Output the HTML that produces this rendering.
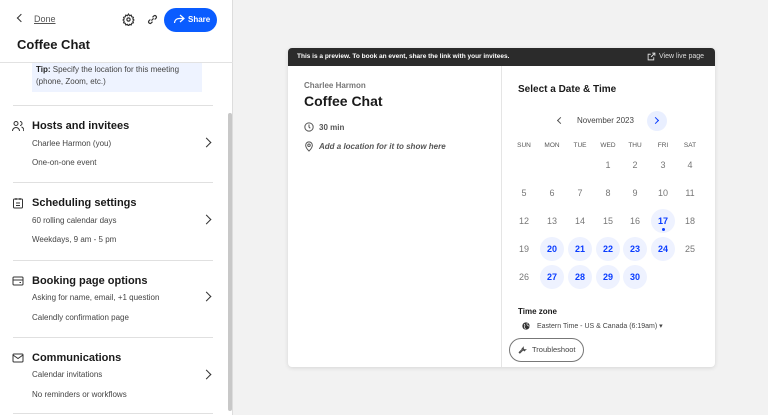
<!DOCTYPE html><html><head><style>
*{margin:0;padding:0;box-sizing:border-box}
body{width:768px;height:415px;overflow:hidden;background:#f2f2f2;font-family:"Liberation Sans",sans-serif;color:#1a1a1a;position:relative}
.sb{position:absolute;left:0;top:0;width:233px;height:415px;background:#fff;border-right:1px solid #ddd}
.abs{position:absolute}
.t{font-size:8px;color:#444}
.h{font-size:11px;font-weight:bold}
.hr{position:absolute;left:13px;width:200px;height:1px;background:#e0e0e0}
.chev{position:absolute;left:203px;width:7px;height:7px;border-right:1.5px solid #333;border-top:1.5px solid #333;transform:rotate(45deg)}
.card{position:absolute;left:288px;top:48px;width:427px;height:319px;background:#fff;border-radius:4px;box-shadow:0 1px 4px rgba(0,0,0,.12);overflow:hidden}
.d{position:absolute;width:24px;height:24px;margin-left:-12px;margin-top:-12px;border-radius:50%;text-align:center;line-height:24px;font-size:9px;color:#777}
.b{background:#eef2ff;color:#0a3cff;font-weight:bold}
.wd{position:absolute;font-size:6.5px;color:#555;width:30px;margin-left:-15px;text-align:center}
</style></head><body>
<div class="sb">
<div class="abs" style="left:18px;top:15px;width:6px;height:6px;border-left:1.5px solid #333;border-bottom:1.5px solid #333;transform:rotate(45deg)"></div>
<div class="abs t" style="left:34px;top:14px;font-size:9px;text-decoration:underline;color:#555">Done</div>
<svg class="abs" style="left:122px;top:13px" width="13" height="13" viewBox="0 0 24 24" fill="none" stroke="#333" stroke-width="2.2"><circle cx="12" cy="12" r="3"/><path d="M12 2l2 3 3-1 1 3 3 1-1 3 2 2-2 2 1 3-3 1-1 3-3-1-2 3-2-3-3 1-1-3-3-1 1-3-2-2 2-2-1-3 3-1 1-3 3 1z"/></svg>
<svg class="abs" style="left:146px;top:13px" width="13" height="13" viewBox="0 0 24 24" fill="none" stroke="#333" stroke-width="2.2"><path d="M10 14l4-4M8 12l-3 3a3 3 0 004 4l3-3M16 12l3-3a3 3 0 00-4-4l-3 3"/></svg>
<div class="abs" style="left:164px;top:8px;width:53px;height:24px;border-radius:12px;background:#0a5cff;color:#fff;font-size:8px;font-weight:bold;line-height:24px;padding-left:24px">Share</div>
<svg class="abs" style="left:173px;top:14px" width="12" height="11" viewBox="0 0 24 22" fill="none" stroke="#fff" stroke-width="2.4"><path d="M14 2l8 7-8 7M22 9H12a9 9 0 00-9 9"/></svg>
<div class="abs" style="left:17px;top:37px;font-size:13px;font-weight:bold">Coffee Chat</div>
<div class="abs" style="left:0;top:62px;width:233px;height:1px;background:#e2e2e2"></div>
<div class="abs" style="left:32px;top:63px;width:170px;height:29px;background:#eef3ff"></div>
<div class="abs t" style="left:36px;top:64px;line-height:12px"><b style="color:#222">Tip:</b> Specify the location for this meeting<br>(phone, Zoom, etc.)</div>
<div class="hr" style="top:105px"></div>
<svg class="abs" style="left:12px;top:120px" width="12" height="12" viewBox="0 0 24 24" fill="none" stroke="#333" stroke-width="2"><circle cx="8" cy="7" r="4"/><path d="M1 22a7 7 0 0114 0M16 3a4 4 0 010 8M19 14a6 6 0 014 8"/></svg>
<div class="abs h" style="left:32px;top:120px">Hosts and invitees</div>
<div class="abs t" style="left:32px;top:139px">Charlee Harmon (you)</div>
<div class="abs t" style="left:32px;top:158px">One-on-one event</div>
<div class="chev" style="top:139px"></div>
<div class="hr" style="top:182px"></div>
<svg class="abs" style="left:12px;top:197px" width="12" height="12" viewBox="0 0 24 24" fill="none" stroke="#333" stroke-width="2"><rect x="3" y="4" width="18" height="18" rx="2"/><path d="M8 2v4M16 2v4M8 12h8M8 17h8"/></svg>
<div class="abs h" style="left:32px;top:197px">Scheduling settings</div>
<div class="abs t" style="left:32px;top:216px">60 rolling calendar days</div>
<div class="abs t" style="left:32px;top:235px">Weekdays, 9 am - 5 pm</div>
<div class="chev" style="top:216px"></div>
<div class="hr" style="top:260px"></div>
<svg class="abs" style="left:12px;top:275px" width="12" height="12" viewBox="0 0 24 24" fill="none" stroke="#333" stroke-width="2"><rect x="2" y="4" width="20" height="16" rx="2"/><path d="M2 10h20M15 15h3"/></svg>
<div class="abs h" style="left:32px;top:275px">Booking page options</div>
<div class="abs t" style="left:32px;top:293px">Asking for name, email, +1 question</div>
<div class="abs t" style="left:32px;top:313px">Calendly confirmation page</div>
<div class="chev" style="top:293px"></div>
<div class="hr" style="top:337px"></div>
<svg class="abs" style="left:12px;top:352px" width="12" height="12" viewBox="0 0 24 24" fill="none" stroke="#333" stroke-width="2"><rect x="2" y="4" width="20" height="16" rx="2"/><path d="M2 6l10 7 10-7"/></svg>
<div class="abs h" style="left:32px;top:352px">Communications</div>
<div class="abs t" style="left:32px;top:370px">Calendar invitations</div>
<div class="abs t" style="left:32px;top:390px">No reminders or workflows</div>
<div class="chev" style="top:371px"></div>
<div class="hr" style="top:413px"></div>
<div class="abs" style="left:228px;top:113px;width:4px;height:298px;background:#c8c8c8;border-radius:2px"></div>
</div>
<div class="card">
<div class="abs" style="left:0;top:0;width:427px;height:18px;background:#2b2b2b;color:#fff;font-size:6.5px;font-weight:bold;line-height:18px;padding-left:9px">This is a preview. To book an event, share the link with your invitees.</div>
<svg class="abs" style="left:359px;top:4px" width="9" height="9" viewBox="0 0 24 24" fill="none" stroke="#ddd" stroke-width="2.4"><path d="M14 3h7v7M21 3l-10 10M18 14v7H3V6h7"/></svg>
<div class="abs" style="left:371px;top:0;font-size:7px;color:#ddd;line-height:17px">View live page</div>
<div class="abs" style="left:213px;top:18px;width:1px;height:301px;background:#e5e5e5"></div>
<div class="abs" style="left:16px;top:33px;font-size:8px;font-weight:bold;color:#777">Charlee Harmon</div>
<div class="abs" style="left:16px;top:45px;font-size:14px;font-weight:bold">Coffee Chat</div>
<svg class="abs" style="left:16px;top:74px" width="10" height="10" viewBox="0 0 24 24" fill="none" stroke="#555" stroke-width="2.4"><circle cx="12" cy="12" r="10"/><path d="M12 6v6l3 3"/></svg>
<div class="abs" style="left:31px;top:75px;font-size:8px;font-weight:bold;color:#555">30 min</div>
<svg class="abs" style="left:16px;top:93px" width="10" height="11" viewBox="0 0 24 26" fill="none" stroke="#555" stroke-width="2.4"><path d="M12 24s8-8 8-14a8 8 0 00-16 0c0 6 8 14 8 14z"/><circle cx="12" cy="10" r="3"/></svg>
<div class="abs" style="left:31px;top:94px;font-size:8px;font-weight:bold;font-style:italic;color:#555">Add a location for it to show here</div>
<div class="abs" style="left:230px;top:36px;font-size:10px;font-weight:bold">Select a Date &amp; Time</div>
<div class="abs" style="left:270px;top:70px;width:5px;height:5px;border-left:1.3px solid #555;border-bottom:1.3px solid #555;transform:rotate(45deg)"></div>
<div class="abs" style="left:289px;top:68px;font-size:8px;color:#444">November 2023</div>
<div class="abs" style="left:359px;top:63px;width:20px;height:20px;border-radius:50%;background:#e9efff"></div>
<div class="abs" style="left:365px;top:70px;width:5px;height:5px;border-right:1.3px solid #0a3cff;border-top:1.3px solid #0a3cff;transform:rotate(45deg)"></div>
<div class="wd" style="left:236px;top:94px">SUN</div><div class="wd" style="left:264px;top:94px">MON</div><div class="wd" style="left:292px;top:94px">TUE</div><div class="wd" style="left:320px;top:94px">WED</div><div class="wd" style="left:347px;top:94px">THU</div><div class="wd" style="left:375px;top:94px">FRI</div><div class="wd" style="left:402px;top:94px">SAT</div>
<div class="d" style="left:320px;top:117px">1</div><div class="d" style="left:347px;top:117px">2</div><div class="d" style="left:375px;top:117px">3</div><div class="d" style="left:402px;top:117px">4</div>
<div class="d" style="left:236px;top:145px">5</div><div class="d" style="left:264px;top:145px">6</div><div class="d" style="left:292px;top:145px">7</div><div class="d" style="left:320px;top:145px">8</div><div class="d" style="left:347px;top:145px">9</div><div class="d" style="left:375px;top:145px">10</div><div class="d" style="left:402px;top:145px">11</div>
<div class="d" style="left:236px;top:173px">12</div><div class="d" style="left:264px;top:173px">13</div><div class="d" style="left:292px;top:173px">14</div><div class="d" style="left:320px;top:173px">15</div><div class="d" style="left:347px;top:173px">16</div><div class="d b" style="left:375px;top:173px">17</div><div class="abs" style="left:374px;top:180px;width:3px;height:3px;border-radius:50%;background:#0a3cff"></div><div class="d" style="left:402px;top:173px">18</div>
<div class="d" style="left:236px;top:201px">19</div><div class="d b" style="left:264px;top:201px">20</div><div class="d b" style="left:292px;top:201px">21</div><div class="d b" style="left:320px;top:201px">22</div><div class="d b" style="left:347px;top:201px">23</div><div class="d b" style="left:375px;top:201px">24</div><div class="d" style="left:402px;top:201px">25</div>
<div class="d" style="left:236px;top:229px">26</div><div class="d b" style="left:264px;top:229px">27</div><div class="d b" style="left:292px;top:229px">28</div><div class="d b" style="left:320px;top:229px">29</div><div class="d b" style="left:347px;top:229px">30</div>
<div class="abs" style="left:230px;top:259px;font-size:8px;font-weight:bold">Time zone</div>
<svg class="abs" style="left:234px;top:274px" width="8" height="8" viewBox="0 0 24 24"><circle cx="12" cy="12" r="11" fill="#333"/><path d="M6 6q4 3 2 7t3 8M16 3q-3 4 1 7t5 2" stroke="#fff" stroke-width="2" fill="none"/></svg>
<div class="abs" style="left:249px;top:274px;font-size:7px;color:#444">Eastern Time - US &amp; Canada (6:19am) ▾</div>
<div class="abs" style="left:221px;top:290px;width:75px;height:24px;border:1px solid #777;border-radius:12px;font-size:7.5px;color:#444;line-height:22px;padding-left:22px">Troubleshoot</div>
<svg class="abs" style="left:230px;top:298px" width="9" height="9" viewBox="0 0 24 24" fill="none" stroke="#444" stroke-width="2.4"><path d="M14 4a5 5 0 006 6l-3 3-3-3-9 9-2-2 9-9-1-1z"/></svg>
</div>
</body></html>
